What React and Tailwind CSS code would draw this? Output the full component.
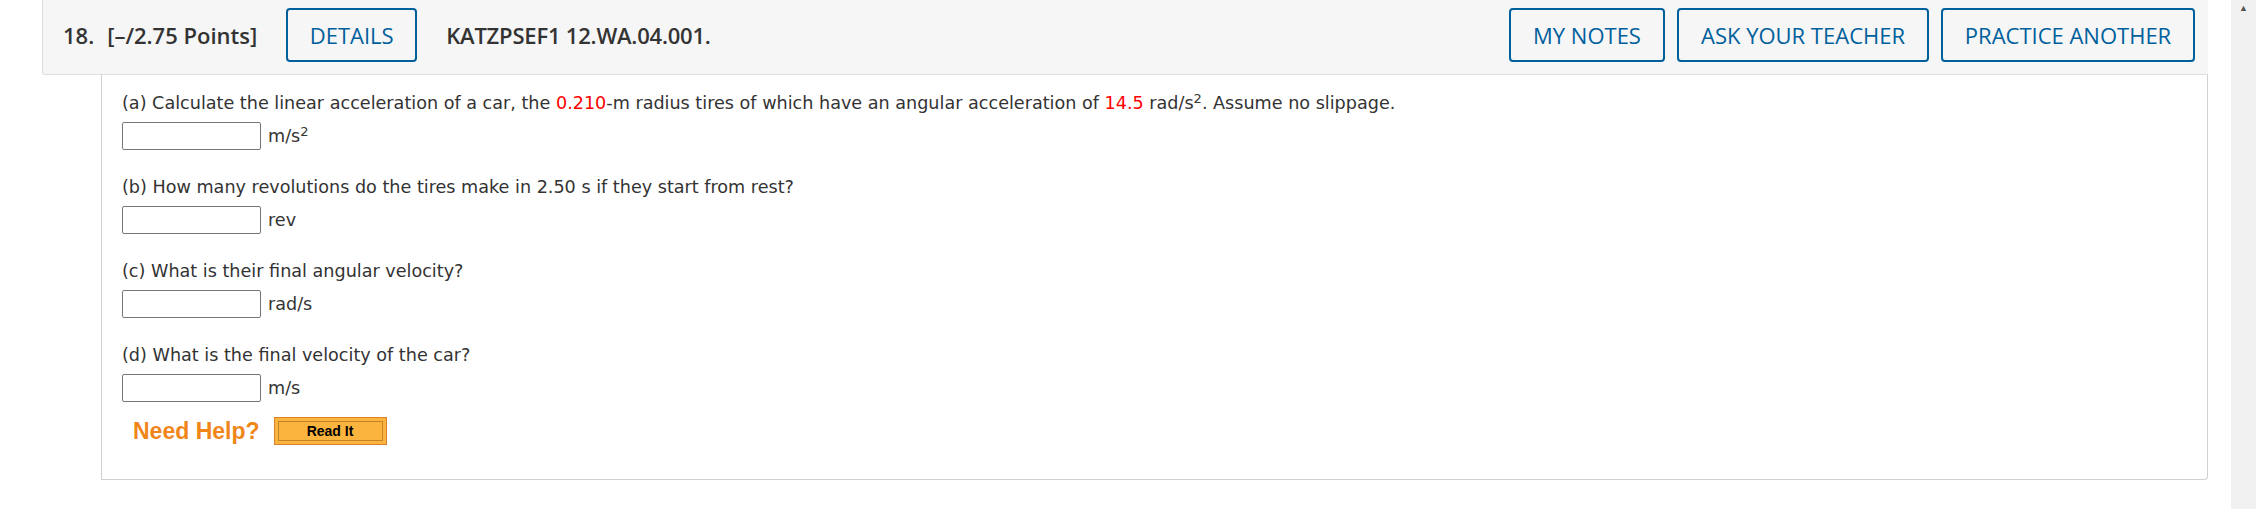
import React from "react";

const parts = [
  {
    label: "(a)",
    text: (
      <>
        Calculate the linear acceleration of a car, the{" "}
        <span className="text-[#ff0000]">0.210</span>-m radius tires of which
        have an angular acceleration of{" "}
        <span className="text-[#ff0000]">14.5</span> rad/s
        <sup className="text-[13px]">2</sup>. Assume no slippage.
      </>
    ),
    unit: (
      <>
        m/s<sup className="text-[13px]">2</sup>
      </>
    ),
  },
  {
    label: "(b)",
    text: "How many revolutions do the tires make in 2.50 s if they start from rest?",
    unit: "rev",
  },
  { label: "(c)", text: "What is their final angular velocity?", unit: "rad/s" },
  { label: "(d)", text: "What is the final velocity of the car?", unit: "m/s" },
];

function HeaderButton({ children, width }) {
  return (
    <button
      className={`h-[54px] ${width} rounded-[4px] border-2 border-[#00609c] text-[22px] text-[#00609c] flex items-center justify-center`}
    >
      {children}
    </button>
  );
}

export default function App() {
  return (
    <div className="flex w-full h-[509px] bg-white overflow-hidden">
      <div className="flex-1 flex flex-col">
        {/* 문제 헤더 */}
        <div
          className="ml-[42px] mr-[23px] h-[75px] flex items-start pt-[8px] pl-[20px] pr-[13px] bg-[#f6f6f6] border-l border-b border-[#dedede] rounded-bl-[3px] text-[#333]"
          style={{ fontFamily: '"Open Sans", sans-serif' }}
        >
          <div className="h-[54px] flex items-center text-[22px] font-semibold">
            <span>18.</span>
            <span className="ml-[13px]">[–/2.75 Points]</span>
          </div>
          <div className="ml-[29px]">
            <HeaderButton width="w-[131px]">DETAILS</HeaderButton>
          </div>
          <div className="ml-[29px] h-[54px] flex items-center text-[22px] font-semibold tracking-[-0.2px]">
            KATZPSEF1 12.WA.04.001.
          </div>
          <div className="ml-auto flex gap-[12px]">
            <HeaderButton width="w-[156px]">MY NOTES</HeaderButton>
            <HeaderButton width="w-[252px]">ASK YOUR TEACHER</HeaderButton>
            <HeaderButton width="w-[254px]">PRACTICE ANOTHER</HeaderButton>
          </div>
        </div>

        {/* 문제 본문 */}
        <div
          className="ml-[101px] mr-[23px] h-[405px] border-l border-r border-b border-[#d0d0d0] rounded-br-[4px] pl-[20px] pt-[17px] text-[17.6px] text-[#333]"
          style={{ fontFamily: '"DejaVu Sans", Verdana, sans-serif' }}
        >
          <div className="flex flex-col gap-[26px]">
            {parts.map((p) => (
              <div key={p.label}>
                <p className="leading-[22px]">
                  {p.label} {p.text}
                </p>
                <div className="mt-[8px] flex items-center">
                  <div className="w-[139px] h-[28px] border border-[#767676] rounded-[2px] bg-white"></div>
                  <span className="ml-[7px] leading-[22px]">{p.unit}</span>
                </div>
              </div>
            ))}
          </div>

          <div
            className="mt-[12px] ml-[11px] flex items-center"
            style={{ fontFamily: '"Liberation Sans", Arial, sans-serif' }}
          >
            <span className="text-[23px] font-bold text-[#f0861a]">
              Need Help?
            </span>
            <div className="ml-[14px] w-[113px] h-[28px] border border-[#d9822b] bg-[#fbb53e] p-[3px]">
              <div className="w-full h-full border border-[#c5832a] flex items-center justify-center text-[14px] font-bold text-black">
                Read It
              </div>
            </div>
          </div>
        </div>
      </div>

      {/* 스크롤바 */}
      <div className="w-[25px] h-full bg-[#f0f0f0] flex justify-center pt-[3px]">
        <span className="text-[9px] leading-[9px] text-[#505050]">▲</span>
      </div>
    </div>
  );
}
